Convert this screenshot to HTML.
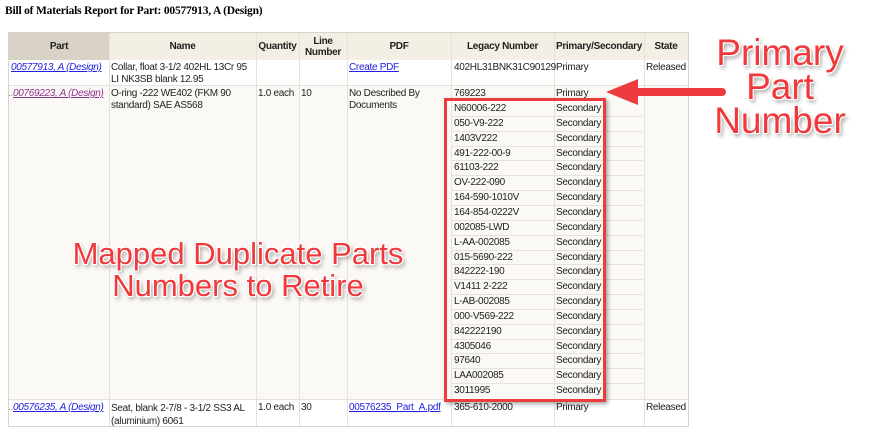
<!DOCTYPE html>
<html><head><style>
body{margin:0;width:880px;height:434px;background:#fff;position:relative;overflow:hidden;font-family:"Liberation Sans",Arial,sans-serif;font-size:10px;letter-spacing:-0.3px;color:#222}
.a{position:absolute;white-space:nowrap}
h1{position:absolute;left:5px;top:5px;margin:0;font:bold 11.5px "Liberation Serif",serif;letter-spacing:-0.2px;color:#000}
.tbl{position:absolute;left:8px;top:32px;width:679px;height:393px;border:1px solid #d8d4c8;background:#fbf9f6}
.hd{position:absolute;top:0;height:27px;background:#f3efe4;font-weight:bold;text-align:center;font-size:10px;line-height:11px;display:flex;align-items:center;justify-content:center;color:#222}
.vl{position:absolute;width:1px;background:#e6e2da}
.hl{position:absolute;height:1px;background:#e6e2da}
a{color:#2020e0;text-decoration:underline}
.big{position:absolute;color:#f0393c;text-align:center;letter-spacing:0;text-shadow:0 0 2px #fff,0 0 2px #fff,1px 1px 0 #fff,-1px -1px 0 #fff,1px -1px 0 #fff,-1px 1px 0 #fff,2px 3px 4px rgba(0,0,0,.45)}
</style></head><body>
<h1>Bill of Materials Report for Part: 00577913, A (Design)</h1>
<div class="tbl">
<div class="hd" style="left:0;width:100px;background:#d8d3c6">Part</div>
<div class="hd" style="left:100px;width:147px">Name</div>
<div class="hd" style="left:247px;width:43px">Quantity</div>
<div class="hd" style="left:290px;width:48px">Line<br>Number</div>
<div class="hd" style="left:338px;width:104px">PDF</div>
<div class="hd" style="left:442px;width:103px">Legacy Number</div>
<div class="hd" style="left:545px;width:90px">Primary/Secondary</div>
<div class="hd" style="left:635px;width:44px">State</div>
<div style="position:absolute;left:0;top:27px;width:679px;height:25px;background:#fff"></div>
<div style="position:absolute;left:0;top:366px;width:679px;height:27px;background:#fff"></div>
<div class="vl" style="left:100px;top:0;height:393px"></div>
<div class="vl" style="left:247px;top:0;height:393px"></div>
<div class="vl" style="left:290px;top:0;height:393px"></div>
<div class="vl" style="left:338px;top:0;height:393px"></div>
<div class="vl" style="left:442px;top:0;height:393px"></div>
<div class="vl" style="left:545px;top:0;height:393px"></div>
<div class="vl" style="left:635px;top:0;height:393px"></div>
<div class="hl" style="left:0;top:52px;width:679px"></div>
<div class="hl" style="left:0;top:366px;width:679px"></div>
</div>
<div class="a" style="left:11px;top:62px"><a href="#" style="font-style:italic">00577913, A (Design)</a></div>
<div class="a" style="left:111px;top:62px;line-height:12px">Collar, float 3-1/2 402HL 13Cr 95<br>LI NK3SB blank 12.95</div>
<div class="a" style="left:349px;top:62px"><a href="#">Create PDF</a></div>
<div class="a" style="left:454px;top:62px">402HL31BNK31C90129</div>
<div class="a" style="left:556px;top:62px">Primary</div>
<div class="a" style="left:646px;top:62px">Released</div>
<div class="a" style="left:8px;top:88px;color:#888">..<a href="#" style="font-style:italic;color:#903090">00769223, A (Design)</a></div>
<div class="a" style="left:111px;top:88px;line-height:12px">O-ring -222 WE402 (FKM 90<br>standard) SAE AS568</div>
<div class="a" style="left:258px;top:88px">1.0 each</div>
<div class="a" style="left:301px;top:88px">10</div>
<div class="a" style="left:349px;top:88px;line-height:12px">No Described By<br>Documents</div>
<div class="a" style="left:454px;top:88px">769223</div>
<div class="a" style="left:556px;top:88px">Primary</div>
<div id="sec"></div>
<div class="a" style="left:8px;top:402px;color:#888">..<a href="#" style="font-style:italic">00576235, A (Design)</a></div>
<div class="a" style="left:111px;top:402px;line-height:13px">Seat, blank 2-7/8 - 3-1/2 SS3 AL<br>(aluminium) 6061</div>
<div class="a" style="left:258px;top:402px">1.0 each</div>
<div class="a" style="left:301px;top:402px">30</div>
<div class="a" style="left:349px;top:402px"><a href="#">00576235_Part_A.pdf</a></div>
<div class="a" style="left:454px;top:402px">365-610-2000</div>
<div class="a" style="left:556px;top:402px">Primary</div>
<div class="a" style="left:646px;top:402px">Released</div>
<script>
var n=["N60006-222","050-V9-222","1403V222","491-222-00-9","61103-222","OV-222-090","164-590-1010V","164-854-0222V","002085-LWD","L-AA-002085","015-5690-222","842222-190","V1411 2-222","L-AB-002085","000-V569-222","842222190","4305046","97640","LAA002085","3011995"];
var h="";for(var i=0;i<n.length;i++){var y=101+i*14.85;
h+='<div class="a" style="left:454px;top:'+(y+2)+'px">'+n[i]+'</div><div class="a" style="left:556px;top:'+(y+2)+'px">Secondary</div>';
if(i>0)h+='<div style="position:absolute;left:451px;top:'+y+'px;width:192px;height:1px;background:#e6e2da"></div>';}
document.getElementById("sec").innerHTML=h;
</script>
<div style="position:absolute;left:444px;top:98px;width:156px;height:298px;border:3px solid #ee3b3e;box-shadow:2px 2px 4px rgba(0,0,0,.35)"></div>
<svg style="position:absolute;left:600px;top:78px" width="130" height="30"><path d="M122 14 L36 14" stroke="#ee3b3e" stroke-width="8" stroke-linecap="round"/><path d="M6 14 L38 1 L38 27 Z" fill="#ee3b3e"/></svg>
<div class="big" style="left:700px;top:36px;width:160px;font-size:37px;line-height:34px">Primary<br>Part<br>Number</div>
<div class="big" style="left:40px;top:238px;width:396px;font-size:31px;line-height:32px">Mapped Duplicate Parts<br>Numbers to Retire</div>
</body></html>
